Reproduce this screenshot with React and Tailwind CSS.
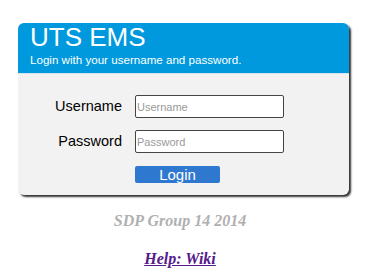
import React from 'react';

const App = () => {
  return (
    <div className="w-[370px] h-[278px] bg-white font-['Liberation_Sans',Arial,sans-serif]">
      <div className="w-[360px] pt-[23px]">
        <div className="ml-[18px] w-[331px] rounded-[6px] bg-[#f2f2f2] shadow-[2px_2px_2px_#333] overflow-hidden">
          <div className="bg-[#0099dd] text-white pl-[12px] h-[51px] border-b border-[#d6e6ef]">
            <h1 className="text-[26px] leading-[28px]">UTS EMS</h1>
            <p className="text-[11.6px] leading-[14px] mt-[2px]">Login with your username and password.</p>
          </div>
          <form className="pt-[21px] pb-[12px] flex flex-col">
            <div className="flex items-center">
              <label className="w-[104px] text-right text-[14.5px] text-black">Username</label>
              <input
                className="ml-[13px] w-[149px] h-[23px] bg-white border border-[#444] rounded-[2px] px-[1px] text-[11px] placeholder:text-[#999] outline-none"
                placeholder="Username"
              />
            </div>
            <div className="flex items-center mt-[12px]">
              <label className="w-[104px] text-right text-[14.5px] text-black">Password</label>
              <input
                type="password"
                className="ml-[13px] w-[149px] h-[23px] bg-white border border-[#444] rounded-[2px] px-[1px] text-[11px] placeholder:text-[#999] outline-none"
                placeholder="Password"
              />
            </div>
            <div className="flex mt-[13px]">
              <button
                type="button"
                className="ml-[117px] w-[85px] h-[17px] rounded-[2px] bg-[#2f78d0] text-white text-[15px] leading-[17px]"
              >
                Login
              </button>
            </div>
          </form>
        </div>
        <div className="text-center font-['Liberation_Serif','Times_New_Roman',serif] font-bold italic">
          <p className="mt-[16px] text-[16px] leading-[20px] text-[#b0b0b0]">SDP Group 14 2014</p>
          <a href="#" className="inline-block mt-[18px] text-[16px] leading-[20px] text-[#551a8b] underline">
            Help: Wiki
          </a>
        </div>
      </div>
    </div>
  );
};

export default App;
